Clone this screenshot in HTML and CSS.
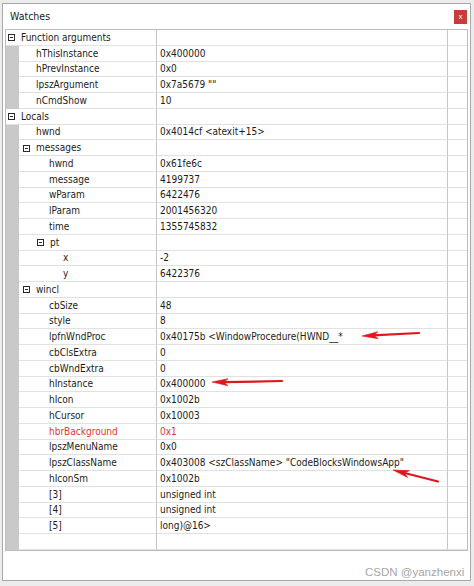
FILE: index.html
```html
<!DOCTYPE html>
<html>
<head>
<meta charset="utf-8">
<title>Watches</title>
<link rel="stylesheet" href="styles.css">
</head>
<body>
<div class="panel">
  <div class="title"><span>Watches</span><span class="close">x</span></div>
  <div class="grid">
    <div class="row cat0"><span class="name"><i class="box"></i>Function arguments</span><span class="val"></span><span class="pad"></span></div>
    <div class="row"><span class="gut"></span><span class="name d1">hThisInstance</span><span class="val">0x400000</span><span class="pad"></span></div>
    <div class="row"><span class="gut"></span><span class="name d1">hPrevInstance</span><span class="val">0x0</span><span class="pad"></span></div>
    <div class="row"><span class="gut"></span><span class="name d1">lpszArgument</span><span class="val">0x7a5679 ""</span><span class="pad"></span></div>
    <div class="row"><span class="gut"></span><span class="name d1">nCmdShow</span><span class="val">10</span><span class="pad"></span></div>
    <div class="row cat0"><span class="name"><i class="box"></i>Locals</span><span class="val"></span><span class="pad"></span></div>
    <div class="row"><span class="gut"></span><span class="name d1">hwnd</span><span class="val">0x4014cf &lt;atexit+15&gt;</span><span class="pad"></span></div>
    <div class="row"><span class="gut"></span><span class="name c1"><i class="box"></i>messages</span><span class="val"></span><span class="pad"></span></div>
    <div class="row"><span class="gut"></span><span class="name d2">hwnd</span><span class="val">0x61fe6c</span><span class="pad"></span></div>
    <div class="row"><span class="gut"></span><span class="name d2">message</span><span class="val">4199737</span><span class="pad"></span></div>
    <div class="row"><span class="gut"></span><span class="name d2">wParam</span><span class="val">6422476</span><span class="pad"></span></div>
    <div class="row"><span class="gut"></span><span class="name d2">lParam</span><span class="val">2001456320</span><span class="pad"></span></div>
    <div class="row"><span class="gut"></span><span class="name d2">time</span><span class="val">1355745832</span><span class="pad"></span></div>
    <div class="row"><span class="gut"></span><span class="name c2"><i class="box"></i>pt</span><span class="val"></span><span class="pad"></span></div>
    <div class="row"><span class="gut"></span><span class="name d3">x</span><span class="val">-2</span><span class="pad"></span></div>
    <div class="row"><span class="gut"></span><span class="name d3">y</span><span class="val">6422376</span><span class="pad"></span></div>
    <div class="row"><span class="gut"></span><span class="name c1"><i class="box"></i>wincl</span><span class="val"></span><span class="pad"></span></div>
    <div class="row"><span class="gut"></span><span class="name d2">cbSize</span><span class="val">48</span><span class="pad"></span></div>
    <div class="row"><span class="gut"></span><span class="name d2">style</span><span class="val">8</span><span class="pad"></span></div>
    <div class="row"><span class="gut"></span><span class="name d2">lpfnWndProc</span><span class="val">0x40175b &lt;WindowProcedure(HWND__*</span><span class="pad"></span></div>
    <div class="row"><span class="gut"></span><span class="name d2">cbClsExtra</span><span class="val">0</span><span class="pad"></span></div>
    <div class="row"><span class="gut"></span><span class="name d2">cbWndExtra</span><span class="val">0</span><span class="pad"></span></div>
    <div class="row"><span class="gut"></span><span class="name d2">hInstance</span><span class="val">0x400000</span><span class="pad"></span></div>
    <div class="row"><span class="gut"></span><span class="name d2">hIcon</span><span class="val">0x1002b</span><span class="pad"></span></div>
    <div class="row"><span class="gut"></span><span class="name d2">hCursor</span><span class="val">0x10003</span><span class="pad"></span></div>
    <div class="row changed"><span class="gut"></span><span class="name d2">hbrBackground</span><span class="val">0x1</span><span class="pad"></span></div>
    <div class="row"><span class="gut"></span><span class="name d2">lpszMenuName</span><span class="val">0x0</span><span class="pad"></span></div>
    <div class="row"><span class="gut"></span><span class="name d2">lpszClassName</span><span class="val">0x403008 &lt;szClassName&gt; "CodeBlocksWindowsApp"</span><span class="pad"></span></div>
    <div class="row"><span class="gut"></span><span class="name d2">hIconSm</span><span class="val">0x1002b</span><span class="pad"></span></div>
    <div class="row"><span class="gut"></span><span class="name d2">[3]</span><span class="val">unsigned int</span><span class="pad"></span></div>
    <div class="row"><span class="gut"></span><span class="name d2">[4]</span><span class="val">unsigned int</span><span class="pad"></span></div>
    <div class="row"><span class="gut"></span><span class="name d2">[5]</span><span class="val">long)@16&gt;</span><span class="pad"></span></div>
    <div class="row"><span class="gut"></span><span class="name d2"></span><span class="val"></span><span class="pad"></span></div>
  </div>
</div>
<svg class="arrows" width="474" height="586" viewBox="0 0 474 586">
  <g fill="#e3141c" stroke="#e3141c">
    <line x1="419" y1="333" x2="373" y2="335.4" stroke-width="2.2" stroke-linecap="round"/>
    <polygon points="362,336 377.8,331.7 374,335.4 378.2,338.7" stroke-width="0.6" stroke-linejoin="round"/>
    <line x1="282" y1="381" x2="224" y2="382.2" stroke-width="2.2" stroke-linecap="round"/>
    <polygon points="212,382 228,378.7 224,382.2 228,385.7" stroke-width="0.6" stroke-linejoin="round"/>
    <line x1="438" y1="481.5" x2="404.6" y2="473" stroke-width="2.2" stroke-linecap="round"/>
    <polygon points="393,470 409.4,470.6 404.6,473 407.6,477.4" stroke-width="0.6" stroke-linejoin="round"/>
  </g>
</svg>
<div class="watermark">CSDN @yanzhenxi</div>
</body>
</html>
```

FILE: styles.css
```css
html, body {
  margin: 0;
  padding: 0;
}
body {
  width: 474px;
  height: 586px;
  overflow: hidden;
  position: relative;
  background: #ececec;
  font-family: "DejaVu Sans Condensed", "DejaVu Sans", sans-serif;
  font-stretch: condensed;
  font-size: 10px;
  color: #1c1c1c;
}
.panel {
  margin: 3px 0 0 2px;
  width: 469px;
  height: 578px;
  box-sizing: border-box;
  border: 1px solid #a9a9a9;
  background: #fff;
  display: flex;
  flex-direction: column;
}
.title {
  height: 25px;
  flex: none;
  box-sizing: border-box;
  display: flex;
  align-items: center;
  justify-content: space-between;
  padding: 0 3px 2px 7px;
  font-size: 10.5px;
  color: #222;
}
.close {
  width: 13px;
  height: 14px;
  margin-top: 3px;
  background: #c93c3c;
  color: #fff;
  font-family: "Liberation Sans", sans-serif;
  font-size: 8px;
  display: flex;
  align-items: center;
  justify-content: center;
  line-height: 1;
}
.grid {
  margin-left: 2px;
  width: 463px;
  box-sizing: border-box;
  border: 1px solid #bdbdbd;
  display: flex;
  flex-direction: column;
}
.row {
  display: flex;
  height: 15.75px;
}
.gut {
  width: 13px;
  flex: none;
  background: #c9c9c9;
}
.name, .val, .pad {
  box-sizing: border-box;
  border-bottom: 1px solid #e1e1e1;
  display: flex;
  align-items: center;
  white-space: nowrap;
  overflow: hidden;
}
.name {
  width: 138px;
  flex: none;
  border-right: 1px solid #c6c6c6;
}
.val {
  width: 291px;
  flex: none;
  border-right: 1px solid #c6c6c6;
  padding-left: 3px;
}
.pad {
  flex: 1;
}
.cat0 .name {
  width: 151px;
  padding-left: 2px;
}
.d1 { padding-left: 17px; }
.d2 { padding-left: 30px; }
.d3 { padding-left: 44px; }
.c1 { padding-left: 4px; }
.c2 { padding-left: 18px; }
.box {
  width: 7px;
  height: 7px;
  flex: none;
  box-sizing: border-box;
  border: 1px solid #2a2a2a;
  margin-right: 6px;
  margin-top: 1px;
  display: flex;
  align-items: center;
  justify-content: center;
}
.box::after {
  content: "";
  width: 3px;
  height: 1px;
  background: #2a2a2a;
}
.changed .name, .changed .val {
  color: #e23434;
}
.arrows {
  position: absolute;
  left: 0;
  top: 0;
  pointer-events: none;
}
.watermark {
  position: absolute;
  left: 365px;
  top: 566px;
  font-family: "Liberation Sans", sans-serif;
  font-size: 11.5px;
  color: #a6a6a6;
  white-space: nowrap;
}
```
